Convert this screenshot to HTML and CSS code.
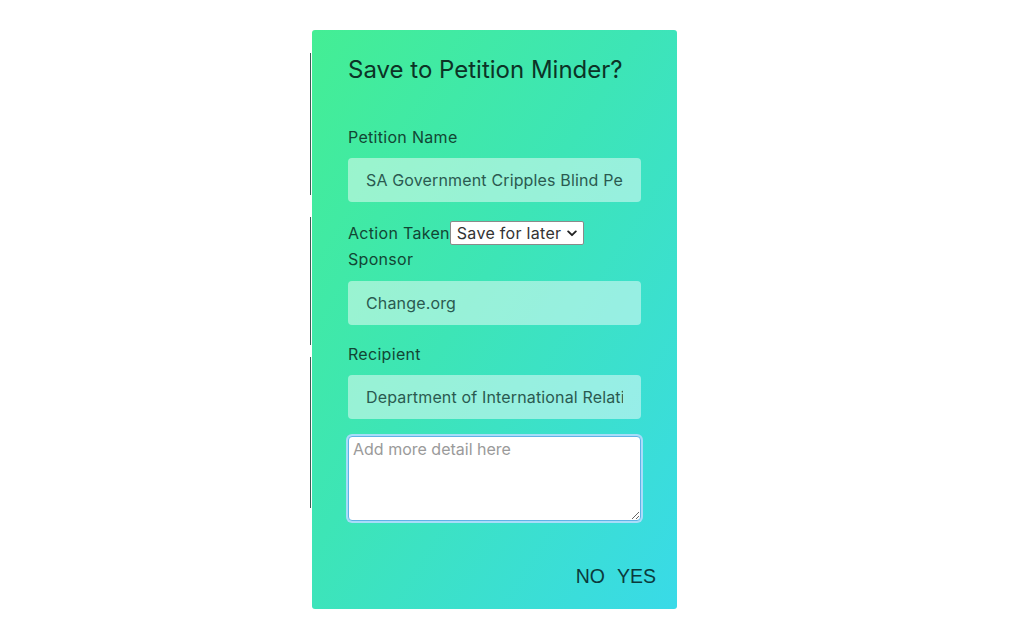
FILE: index.html
```html
<!DOCTYPE html>
<html lang="en">
<head>
<meta charset="utf-8">
<title>Save to Petition Minder?</title>
<link rel="stylesheet" href="styles.css">
</head>
<body>
<div class="card">
  <h1 class="title">Save to Petition Minder?</h1>

  <label class="label" for="pname">Petition Name</label>
  <input class="field" id="pname" type="text" value="SA Government Cripples Blind People">

  <div class="action-row">
    <label class="label-inline" for="action">Action Taken</label>
    <span class="select-wrap">
      <select class="select" id="action">
        <option>Save for later</option>
      </select>
      <svg class="chevron" width="10" height="7" viewBox="0 0 10 7" aria-hidden="true"><path d="M1.2 1.4 L5 5.2 L8.8 1.4" fill="none" stroke="#222" stroke-width="1.9" stroke-linecap="round" stroke-linejoin="round"/></svg>
    </span>
  </div>

  <label class="label label-sponsor" for="sponsor">Sponsor</label>
  <input class="field" id="sponsor" type="text" value="Change.org">

  <label class="label" for="recipient">Recipient</label>
  <input class="field" id="recipient" type="text" value="Department of International Relations">

  <textarea class="notes" placeholder="Add more detail here"></textarea>

  <div class="actions">
    <button class="btn" type="button">NO</button>
    <button class="btn" type="button">YES</button>
  </div>
</div>
</body>
</html>
```

FILE: styles.css
```css
html, body {
  margin: 0;
  padding: 0;
  background: #ffffff;
}

body {
  font-family: Inter, "Liberation Sans", Arial, sans-serif;
}

.card {
  position: relative;
  box-sizing: border-box;
  width: 365px;
  height: 579px;
  margin: 30px 0 0 312px;
  padding: 26px 36px 21px 36px;
  border-radius: 3px;
  background: linear-gradient(to bottom right, #44ee94 0%, #3de5b6 45%, #39dae8 100%);
  display: flex;
  flex-direction: column;
}

.card::before {
  content: "";
  position: absolute;
  left: -2px;
  top: 23px;
  width: 1px;
  height: 455px;
  background: linear-gradient(to bottom,
    rgba(10, 50, 40, 0.8) 0px, rgba(10, 50, 40, 0.8) 142px,
    transparent 142px, transparent 164px,
    rgba(10, 50, 40, 0.8) 164px, rgba(10, 50, 40, 0.8) 292px,
    transparent 292px, transparent 304px,
    rgba(10, 50, 40, 0.8) 304px, rgba(10, 50, 40, 0.8) 455px);
}

.title {
  margin: 0 0 44px 0;
  font-size: 24px;
  line-height: 28px;
  font-weight: normal;
  color: #0c3326;
}

.label {
  display: block;
  font-size: 16px;
  line-height: 19px;
  letter-spacing: 0.3px;
  color: #124634;
  margin: 0 0 11px 0;
}

.label-sponsor {
  margin-top: 5px;
  margin-bottom: 12px;
}

.field {
  box-sizing: border-box;
  width: 293px;
  height: 44px;
  margin: 0 0 19px 0;
  padding: 0 18px 0 18px;
  border: none;
  border-radius: 4px;
  background: rgba(255, 255, 255, 0.47);
  font-family: Inter, "Liberation Sans", Arial, sans-serif;
  font-size: 16px;
  letter-spacing: 0.15px;
  color: #2a5a50;
  outline: none;
}

#sponsor {
  margin-bottom: 20px;
}

#recipient {
  margin-bottom: 17px;
}

.action-row {
  display: flex;
  align-items: center;
  height: 24px;
}

.label-inline {
  font-size: 16px;
  line-height: 19px;
  letter-spacing: 0.3px;
  color: #124634;
}

.select-wrap {
  position: relative;
  display: inline-block;
}

.select {
  -webkit-appearance: none;
  appearance: none;
  box-sizing: border-box;
  width: 134px;
  height: 24px;
  margin: 0;
  padding: 0 0 0 6px;
  border: 1px solid #8a8a8a;
  border-radius: 2px;
  background: #ffffff;
  font-family: Inter, "Liberation Sans", Arial, sans-serif;
  font-size: 16px;
  letter-spacing: 0.3px;
  color: #333333;
  outline: none;
}

.chevron {
  position: absolute;
  right: 7px;
  top: 9px;
  pointer-events: none;
}

.notes {
  box-sizing: border-box;
  width: 293px;
  height: 85px;
  margin: 0;
  padding: 2px 4px;
  border: 1px solid #5fb3e6;
  border-radius: 4px;
  box-shadow: 0 0 0 2px #a9dcfa;
  background: #ffffff;
  font-family: Inter, "Liberation Sans", Arial, sans-serif;
  font-size: 16px;
  color: #222;
  outline: none;
  resize: both;
}

.notes::placeholder {
  color: #9a9a9a;
}

.actions {
  margin-top: auto;
  margin-right: -15px;
  align-self: flex-end;
  display: flex;
  gap: 12px;
}

.btn {
  background: none;
  border: none;
  padding: 0;
  margin: 0;
  font-family: "Liberation Sans", Arial, sans-serif;
  font-size: 19.5px;
  line-height: 24px;
  color: #0b3a3c;
  cursor: pointer;
}
```
